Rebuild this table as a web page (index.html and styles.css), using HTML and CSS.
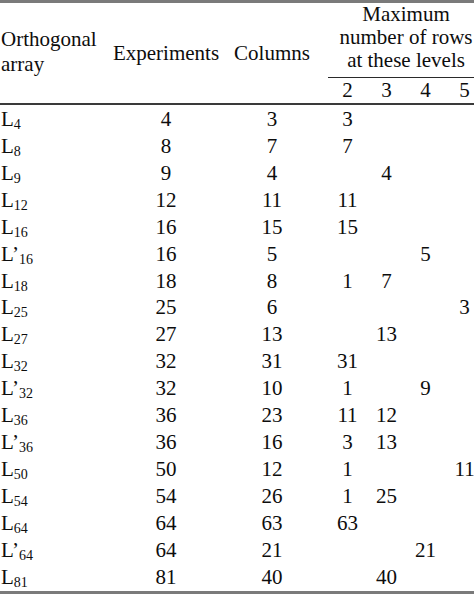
FILE: index.html
```html
<!DOCTYPE html>
<html lang="en">
<head>
<meta charset="utf-8">
<title>Orthogonal arrays</title>
<link rel="stylesheet" href="styles.css">
</head>
<body>
<table class="oa">
  <colgroup>
    <col class="w-name"><col class="w-exp"><col class="w-col">
    <col class="w-lv"><col class="w-lv"><col class="w-lv"><col class="w-lv">
  </colgroup>
  <thead>
    <tr>
      <th rowspan="2" class="h-name">Orthogonal<br>array</th>
      <th rowspan="2" class="h-mid">Experiments</th>
      <th rowspan="2" class="h-mid h-cols">Columns</th>
      <th colspan="4" class="h-max">Maximum<br>number of rows<br>at these levels</th>
    </tr>
    <tr class="lv-row">
      <th>2</th><th>3</th><th>4</th><th>5</th>
    </tr>
  </thead>
  <tbody>
    <tr><td class="name">L<sub>4</sub></td><td>4</td><td class="cols">3</td><td>3</td><td></td><td></td><td></td></tr>
    <tr><td class="name">L<sub>8</sub></td><td>8</td><td class="cols">7</td><td>7</td><td></td><td></td><td></td></tr>
    <tr><td class="name">L<sub>9</sub></td><td>9</td><td class="cols">4</td><td></td><td>4</td><td></td><td></td></tr>
    <tr><td class="name">L<sub>12</sub></td><td>12</td><td class="cols">11</td><td>11</td><td></td><td></td><td></td></tr>
    <tr><td class="name">L<sub>16</sub></td><td>16</td><td class="cols">15</td><td>15</td><td></td><td></td><td></td></tr>
    <tr><td class="name">L’<sub>16</sub></td><td>16</td><td class="cols">5</td><td></td><td></td><td>5</td><td></td></tr>
    <tr><td class="name">L<sub>18</sub></td><td>18</td><td class="cols">8</td><td>1</td><td>7</td><td></td><td></td></tr>
    <tr><td class="name">L<sub>25</sub></td><td>25</td><td class="cols">6</td><td></td><td></td><td></td><td>3</td></tr>
    <tr><td class="name">L<sub>27</sub></td><td>27</td><td class="cols">13</td><td></td><td>13</td><td></td><td></td></tr>
    <tr><td class="name">L<sub>32</sub></td><td>32</td><td class="cols">31</td><td>31</td><td></td><td></td><td></td></tr>
    <tr><td class="name">L’<sub>32</sub></td><td>32</td><td class="cols">10</td><td>1</td><td></td><td>9</td><td></td></tr>
    <tr><td class="name">L<sub>36</sub></td><td>36</td><td class="cols">23</td><td>11</td><td>12</td><td></td><td></td></tr>
    <tr><td class="name">L’<sub>36</sub></td><td>36</td><td class="cols">16</td><td>3</td><td>13</td><td></td><td></td></tr>
    <tr><td class="name">L<sub>50</sub></td><td>50</td><td class="cols">12</td><td>1</td><td></td><td></td><td>11</td></tr>
    <tr><td class="name">L<sub>54</sub></td><td>54</td><td class="cols">26</td><td>1</td><td>25</td><td></td><td></td></tr>
    <tr><td class="name">L<sub>64</sub></td><td>64</td><td class="cols">63</td><td>63</td><td></td><td></td><td></td></tr>
    <tr><td class="name">L’<sub>64</sub></td><td>64</td><td class="cols">21</td><td></td><td></td><td>21</td><td></td></tr>
    <tr><td class="name">L<sub>81</sub></td><td>81</td><td class="cols">40</td><td></td><td>40</td><td></td><td></td></tr>
  </tbody>
</table>
</body>
</html>
```

FILE: styles.css
```css
html, body {
  margin: 0;
  padding: 0;
  background: #ffffff;
}

body {
  width: 474px;
  height: 594px;
  overflow: hidden;
  font-family: "Liberation Serif", "Times New Roman", serif;
  font-size: 21px;
  color: #0d0d0d;
}

.oa {
  table-layout: fixed;
  width: 484px;
  border-collapse: separate;
  border-spacing: 0;
  border-top: 3px solid #7a7a7a;
  border-bottom: 3px solid #7a7a7a;
}

.w-name { width: 112px; }
.w-exp { width: 108px; }
.w-col { width: 108px; }
.w-lv { width: 39px; }

.oa th {
  font-weight: normal;
  white-space: nowrap;
  padding: 0;
  text-align: center;
}

.oa th.h-name {
  text-align: left;
  vertical-align: middle;
  line-height: 25px;
  padding: 0 0 2px 1px;
  border-bottom: 2px solid #3a3a3a;
}

.oa th.h-mid {
  vertical-align: middle;
  line-height: 25px;
  border-bottom: 2px solid #3a3a3a;
}

.oa th.h-cols {
  padding-right: 4px;
}

.oa th.h-max {
  line-height: 23px;
  vertical-align: top;
  padding: 0 0 5px 0;
  border-bottom: 1px solid #2a2a2a;
}

.oa .lv-row th {
  line-height: 23px;
  padding: 1px 0 1px 0;
  border-bottom: 2px solid #3a3a3a;
}

.oa td {
  padding: 2.6px 0 1.9px 0;
  line-height: 22.5px;
  text-align: center;
  white-space: nowrap;
}

.oa td.cols {
  padding-right: 4px;
}

.oa td.name {
  text-align: left;
  padding-left: 1px;
}

.name sub {
  font-size: 14px;
  line-height: 0;
  vertical-align: -3px;
}
```
